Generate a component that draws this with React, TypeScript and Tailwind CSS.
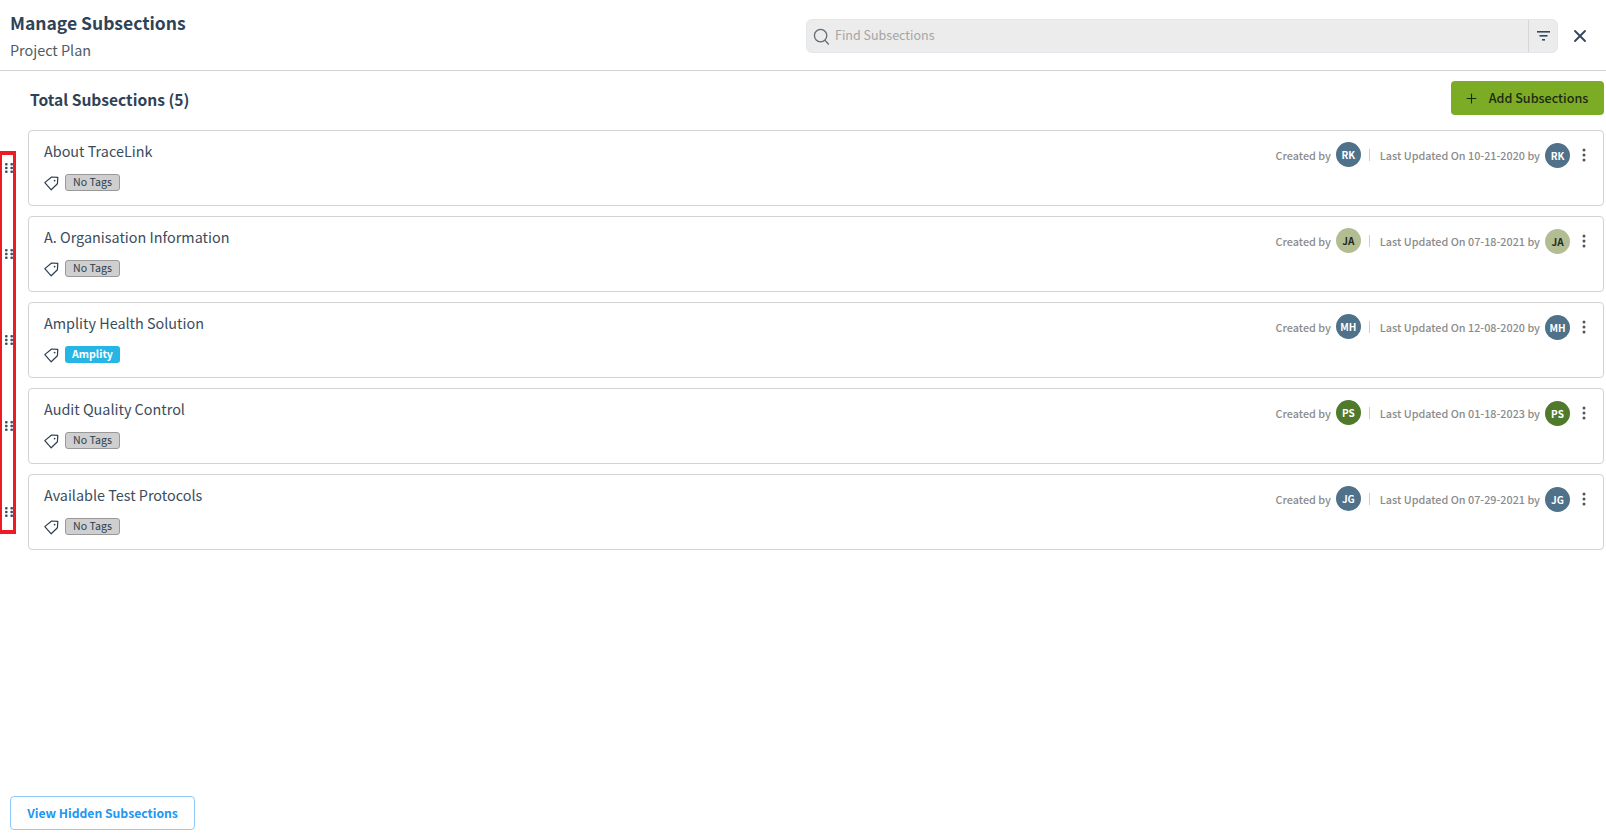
import React from "react";
import { Plus, X } from "lucide-react";

const FONT = "font-['Noto_Sans_CJK_SC','Noto_Sans',sans-serif]";

interface Subsection {
  title: string;
  initials: string;
  updated: string;
  tag: string;
  avatar: string;
}

const subsections: Subsection[] = [
  { title: "About TraceLink", initials: "RK", updated: "10-21-2020", tag: "No Tags", avatar: "bg-[#4f7189] text-white" },
  { title: "A. Organisation Information", initials: "JA", updated: "07-18-2021", tag: "No Tags", avatar: "bg-[#b3bd93] text-[#1f2a1a]" },
  { title: "Amplity Health Solution", initials: "MH", updated: "12-08-2020", tag: "Amplity", avatar: "bg-[#4f7189] text-white" },
  { title: "Audit Quality Control", initials: "PS", updated: "01-18-2023", tag: "No Tags", avatar: "bg-[#4f7a2c] text-white" },
  { title: "Available Test Protocols", initials: "JG", updated: "07-29-2021", tag: "No Tags", avatar: "bg-[#4f7189] text-white" },
];

const GripIcon = () => (
  <svg width="8" height="10" viewBox="0 0 8 10" className="fill-[#3d5166]">
    <rect x="0" y="0" width="2.6" height="2.4" rx="1" />
    <rect x="5.4" y="0" width="2.6" height="2.4" rx="1" />
    <rect x="0" y="3.8" width="2.6" height="2.4" rx="1" />
    <rect x="5.4" y="3.8" width="2.6" height="2.4" rx="1" />
    <rect x="0" y="7.6" width="2.6" height="2.4" rx="1" />
    <rect x="5.4" y="7.6" width="2.6" height="2.4" rx="1" />
  </svg>
);

const TagIcon = () => (
  <svg width="15" height="15" viewBox="0 0 15 15" fill="none" stroke="#2c3e50" strokeWidth="1.2" strokeLinejoin="round" className="mt-[3px]">
    <path d="M0.8 6.6 L7.6 1 L13.8 1.4 L13.4 7.8 L7.2 13.8 Z" />
    <circle cx="10.6" cy="4.6" r="0.9" fill="#2c3e50" stroke="none" />
  </svg>
);

const SearchIcon = () => (
  <svg width="17" height="17" viewBox="0 0 17 17" fill="none" stroke="#5f6b76" strokeWidth="1.3" strokeLinecap="round">
    <circle cx="7.6" cy="7.6" r="6.2" />
    <path d="M12 12.4 L15.4 16" />
  </svg>
);

const FilterIcon = () => (
  <svg width="13" height="10" viewBox="0 0 13 10" className="fill-[#34495e]">
    <rect x="0" y="0" width="13" height="1.6" />
    <rect x="2.5" y="4" width="8" height="1.6" />
    <rect x="5" y="8" width="3" height="1.6" />
  </svg>
);

const Avatar = ({ initials, className }: { initials: string; className: string }) => (
  <div className={`flex h-[25px] w-[25px] items-center justify-center rounded-full text-[10px] font-bold ${className}`}>
    {initials}
  </div>
);

const SubsectionRow = ({ item }: { item: Subsection }) => (
  <div className="flex items-center">
    <div className="flex w-[28px] shrink-0 self-stretch items-center pl-[5px]">
      <GripIcon />
    </div>
    <div className="flex h-[76px] flex-1 justify-between rounded border border-[#d2d2d2] bg-white pl-[15px] pr-[17px]">
      <div>
        <div className="mt-[8px] text-[14.4px] leading-[24px] text-[#3b4c5c]">{item.title}</div>
        <div className="mt-[10px] flex items-center gap-[6px]">
          <TagIcon />
          {item.tag === "No Tags" ? (
            <span className="flex h-[17px] w-[55px] items-center justify-center rounded-[3px] border border-[#999] bg-[#cfcfcf] text-[10.6px] text-[#2c3e50]">
              {item.tag}
            </span>
          ) : (
            <span className="flex h-[17px] w-[55px] items-center justify-center rounded-[3px] bg-[#25b6e6] text-[10.6px] font-semibold text-white">
              {item.tag}
            </span>
          )}
        </div>
      </div>
      <div className="mt-[11px] flex h-[26px] items-center text-[10.8px] font-medium text-[#8b8b8b]">
        <span>Created by</span>
        <Avatar initials={item.initials} className={`ml-[5px] -mt-[2px] ${item.avatar}`} />
        <span className="ml-[8px] mr-[10px] h-[12px] w-px bg-[#cfcfcf]" />
        <span>Last Updated On {item.updated} by</span>
        <Avatar initials={item.initials} className={`ml-[5px] ${item.avatar}`} />
        <svg width="4" height="14" viewBox="0 0 4 14" className="ml-[12px] fill-[#555]">
          <circle cx="2" cy="2" r="1.5" />
          <circle cx="2" cy="7" r="1.5" />
          <circle cx="2" cy="12" r="1.5" />
        </svg>
      </div>
    </div>
  </div>
);

export default function App() {
  return (
    <div className={`relative flex h-[835px] w-[1606px] flex-col overflow-hidden bg-white ${FONT}`}>
      <header className="flex h-[71px] shrink-0 items-start justify-between border-b border-[#d2d2d2] pl-[10px] pr-[16px]">
        <div>
          <h1 className="mt-[8px] text-[17.5px] leading-[30px] font-semibold text-[#2f4358]">Manage Subsections</h1>
          <p className="text-[14.4px] leading-[24px] text-[#4f5b66]">Project Plan</p>
        </div>
        <div className="mt-[19px] flex items-center">
          <div className="flex h-[34px] w-[752px] items-center rounded-md border border-[#e3e6ec] bg-[#ececec]">
            <div className="ml-[6px] mr-[5px]">
              <SearchIcon />
            </div>
            <span className="-mt-[2px] flex-1 text-[12.5px] text-[#a5a5a5]">Find Subsections</span>
            <div className="flex h-[32px] w-[29px] items-center justify-center border-l border-[#d6d6d6]">
              <FilterIcon />
            </div>
          </div>
          <X className="ml-[12px] h-[20px] w-[20px] text-[#34495e]" strokeWidth={2.25} />
        </div>
      </header>

      <div className="flex items-start justify-between pl-[30px] pr-[2px] pt-[10px]">
        <h2 className="mt-[1px] text-[15.6px] leading-[34px] font-semibold text-[#2f4358]">Total Subsections (5)</h2>
        <button className="flex h-[34px] w-[153px] items-center justify-center gap-[10px] rounded bg-[#7cac26] pr-[3px] text-[12.6px] font-medium text-[#1c2a10]">
          <Plus className="h-[15px] w-[15px]" strokeWidth={1.75} />
          Add Subsections
        </button>
      </div>

      <div className="mt-[14px] flex flex-col gap-[10px] pr-[2px]">
        {subsections.map((item) => (
          <SubsectionRow key={item.title} item={item} />
        ))}
      </div>

      <div className="mt-auto pb-[5px] pl-[10px]">
        <button className="h-[34px] w-[185px] rounded border border-[#90c8f8] bg-white text-[12.2px] font-semibold text-[#2196f3]">
          View Hidden Subsections
        </button>
      </div>

      {/* red annotation round the drag handles */}
      <div className="absolute left-0 top-[151px] h-[383px] w-[16px] border-t-[4px] border-r-[3px] border-b-[4px] border-l-[2px] border-[#ed1c24]" />
    </div>
  );
}
